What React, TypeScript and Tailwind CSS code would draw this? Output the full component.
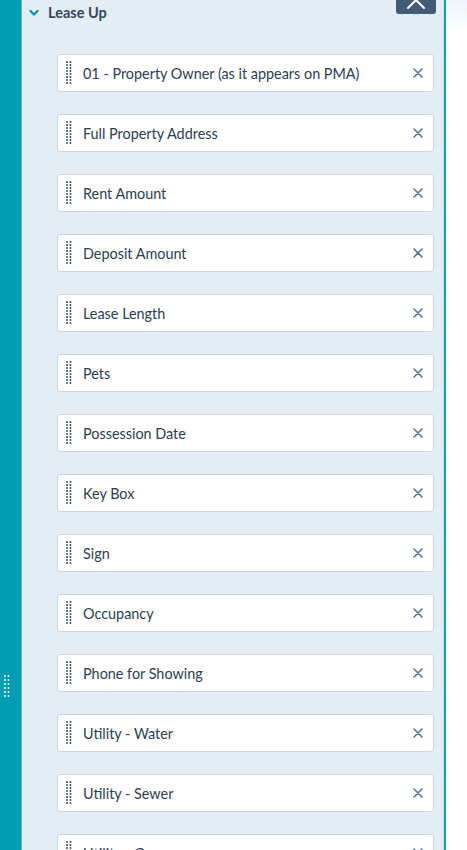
import React from "react";

const fields = [
  "01 - Property Owner (as it appears on PMA)",
  "Full Property Address",
  "Rent Amount",
  "Deposit Amount",
  "Lease Length",
  "Pets",
  "Possession Date",
  "Key Box",
  "Sign",
  "Occupancy",
  "Phone for Showing",
  "Utility - Water",
  "Utility - Sewer",
  "Utility - Gas",
];

const DragDots: React.FC<{ rows: number; pitch: number; color: string }> = ({
  rows,
  pitch,
  color,
}) => (
  <svg width="6" height={rows * pitch} viewBox={`0 0 6 ${rows * pitch}`}>
    {Array.from({ length: rows }).map((_, i) => (
      <g key={i} fill={color}>
        <circle cx="1" cy={i * pitch + 1} r="0.95" />
        <circle cx="4.5" cy={i * pitch + 1} r="0.95" />
      </g>
    ))}
  </svg>
);

const FieldCard: React.FC<{ label: string }> = ({ label }) => (
  <div className="flex h-[38px] shrink-0 items-center rounded-[3px] border border-[#cbd6e2] bg-white pl-2 pr-[10px]">
    <DragDots rows={8} pitch={3} color="#33475b" />
    <span className="ml-[11px] flex-1 truncate pt-[2px] text-[14.4px] text-[#2d3e50]">{label}</span>
    <svg width="10" height="10" viewBox="0 0 10 10">
      <path d="M1 1 L9 9 M9 1 L1 9" stroke="#516f90" strokeWidth="1.5" strokeLinecap="round" />
    </svg>
  </div>
);

export default function App() {
  return (
    <div
      className="flex h-[850px] w-[467px] overflow-hidden bg-white"
      style={{ fontFamily: "Lato, 'Open Sans', sans-serif" }}
    >
      {/* left rail */}
      <div className="relative flex w-[22px] shrink-0 items-center border-r border-[#5fbccc] bg-[#009db5]">
        <div className="ml-1 mt-[524px]">
          <DragDots rows={6} pitch={4} color="#ffffff" />
        </div>
      </div>

      {/* panel */}
      <div className="relative flex w-[422px] shrink-0 flex-col border-r border-[#d6e0ea] bg-[#e5edf4] pl-[35px] pr-[9px]">
        <div className="-ml-[28px] flex h-[26px] shrink-0 items-center gap-[9px]">
          <svg width="10" height="8" viewBox="0 0 10 8">
            <path d="M1.5 2 L5 5.5 L8.5 2" stroke="#0091ae" strokeWidth="2.2" fill="none" strokeLinecap="round" strokeLinejoin="round" />
          </svg>
          <span className="text-[14.5px] font-bold text-[#33475b]">Lease Up</span>
        </div>

        <div className="absolute right-[7px] top-[-26px] h-[40px] w-[40px] rounded-[3px] bg-[#425b76]">
          <svg width="40" height="40" viewBox="0 0 40 40">
            <path d="M12 18 L28 34 M28 18 L12 34" stroke="#ffffff" strokeWidth="2" strokeLinecap="round" />
          </svg>
        </div>

        <div className="mt-[28px] flex shrink-0 flex-col gap-[22px]">
          {fields.map((f) => (
            <FieldCard key={f} label={f} />
          ))}
        </div>
      </div>

      {/* teal edge + blank */}
      <div className="w-[2px] shrink-0 bg-[#00a4bd]" />
      <div className="flex-1 bg-gradient-to-b from-[#eef3f8] to-white to-[30px]" />
    </div>
  );
}
